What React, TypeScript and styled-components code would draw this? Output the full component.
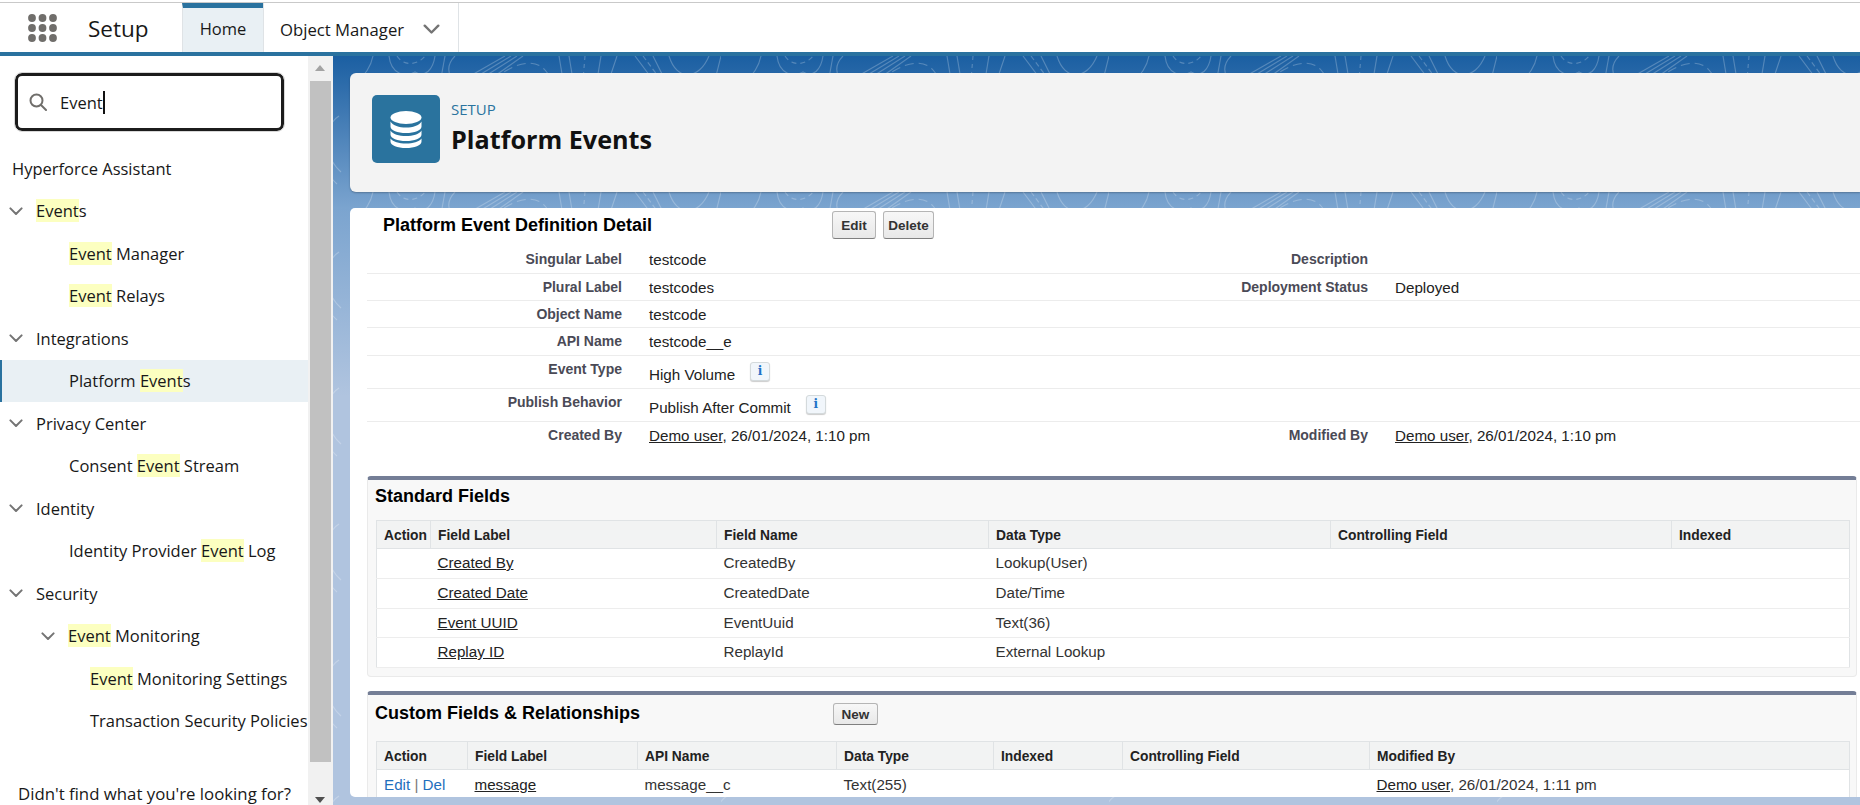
import React from 'react';
import styled, { createGlobalStyle } from 'styled-components';

const GlobalStyle = createGlobalStyle`
    html, body, #root {
        margin: 0;
        height: 100%;
    }
    body {
        overflow: hidden;
        background: #fff;
        color: #181818;
        font-family: "Open Sans", "Liberation Sans", sans-serif;
    }
    * {
        box-sizing: border-box;
    }
`

const Chevron = ({ size = 14 }: { size?: number }) => (
    <svg width={size} height={size * 0.6} viewBox="0 0 20 12" fill="none" stroke="#747474" strokeWidth="2.8" strokeLinecap="round" strokeLinejoin="round">
        <polyline points="2,2 10,10 18,2" />
    </svg>
);

const Waffle = () => (
    <svg width="29" height="28" viewBox="0 0 29 28" fill="#706e6b">
        {[4, 14.5, 25].map(x => [4, 14, 24].map(y => <circle key={`${x}-${y}`} cx={x} cy={y} r="3.9" />))}
    </svg>
);

const SearchGlyph = () => (
    <svg width="18" height="18" viewBox="0 0 18 18" fill="none" stroke="#706e6b" strokeWidth="2" strokeLinecap="round">
        <circle cx="7.5" cy="7.5" r="6" />
        <line x1="12" y1="12" x2="17" y2="17" />
    </svg>
);

const DatabaseGlyph = () => (
    <svg width="32" height="37" viewBox="0 0 32 37" fill="#fff">
        <ellipse cx="16" cy="6.5" rx="15.5" ry="6.5" />
        <path d="M0.5 10.5 C3 14.5 9 16.5 16 16.5 C23 16.5 29 14.5 31.5 10.5 V15.5 C31.5 19.5 24.5 22 16 22 C7.5 22 0.5 19.5 0.5 15.5 Z" />
        <path d="M0.5 19.5 C3 23.5 9 25 16 25 C23 25 29 23.5 31.5 19.5 V23.5 C31.5 27.5 24.5 30 16 30 C7.5 30 0.5 27.5 0.5 23.5 Z" />
        <path d="M0.5 27.5 C3 31 9 32.5 16 32.5 C23 32.5 29 31 31.5 27.5 V30.5 C31.5 34.5 24.5 37 16 37 C7.5 37 0.5 34.5 0.5 30.5 Z" />
    </svg>
);

// contour lines behind the cards, the tile repeats every 388px
const Contours = () => (
    <PatternLayer width="100%" height="100%">
        <defs>
            <pattern id="topo" width="388" height="136" patternUnits="userSpaceOnUse">
                <g fill="none" stroke="#fff" strokeOpacity="0.24" strokeWidth="1.1">
                    <path d="M-6 0 C-4 12 -14 24 -26 30" />
                    <path d="M40 0 C38 10 32 20 24 24" />
                    <path d="M56 0 C58 18 72 22 82 16 C92 22 100 14 102 0" />
                    <path d="M64 0 C70 10 84 10 92 0" strokeDasharray="5 4" />
                    <path d="M112 0 L108 22" />
                    <path d="M122 0 C116 6 114 14 118 22" />
                    <path d="M172 0 L130 24" /><path d="M178 0 L138 24" /><path d="M184 0 L146 24" /><path d="M190 0 L156 24" />
                    <path d="M160 24 C176 10 200 0 212 14 L220 24" strokeDasharray="9 5" />
                    <path d="M226 0 L230 24" /><path d="M236 0 L240 24" /><path d="M252 0 L250 24" strokeDasharray="4 4" />
                    <path d="M268 0 L264 24" />
                    <path d="M284 0 L276 24" />
                    <path d="M302 0 L320 24" /><path d="M310 0 L328 24" strokeDasharray="5 3" /><path d="M320 0 L332 24" />
                    <path d="M336 0 C344 26 366 24 376 0" />
                    <path d="M382 24 L388 0" />
                    <path d="M6 60 C-10 70 -10 100 8 116" />
                    <path d="M-2 50 C-20 80 -14 112 4 128" />
                </g>
            </pattern>
        </defs>
        <rect width="100%" height="100%" fill="url(#topo)" />
    </PatternLayer>
);

const Hit = () => <Mark>Event</Mark>;

const navItems = [
    { indent: 12, label: <>Hyperforce Assistant</> },
    { indent: 9, open: true, label: <><Hit />s</> },
    { indent: 69, label: <><Hit /> Manager</> },
    { indent: 69, label: <><Hit /> Relays</> },
    { indent: 9, open: true, label: <>Integrations</> },
    { indent: 69, selected: true, label: <>Platform <Hit />s</> },
    { indent: 9, open: true, label: <>Privacy Center</> },
    { indent: 69, label: <>Consent <Hit /> Stream</> },
    { indent: 9, open: true, label: <>Identity</> },
    { indent: 69, label: <>Identity Provider <Hit /> Log</> },
    { indent: 9, open: true, label: <>Security</> },
    { indent: 41, open: true, label: <><Hit /> Monitoring</> },
    { indent: 90, label: <><Hit /> Monitoring Settings</> },
    { indent: 90, label: <>Transaction Security Policies</> },
];

const detailRows = [
    { height: 28, label: 'Singular Label', value: 'testcode', label2: 'Description', value2: '' },
    { height: 27, label: 'Plural Label', value: 'testcodes', label2: 'Deployment Status', value2: 'Deployed' },
    { height: 27, label: 'Object Name', value: 'testcode' },
    { height: 28, label: 'API Name', value: 'testcode__e' },
    { height: 33, tall: true, label: 'Event Type', value: 'High Volume' },
    { height: 33, tall: true, label: 'Publish Behavior', value: 'Publish After Commit' },
];

const standardFields = [
    ['Created By', 'CreatedBy', 'Lookup(User)', 30],
    ['Created Date', 'CreatedDate', 'Date/Time', 30],
    ['Event UUID', 'EventUuid', 'Text(36)', 29],
    ['Replay ID', 'ReplayId', 'External Lookup', 30],
] as const;

export default function App() {
    return (
        <Page>
            <GlobalStyle />
            <Header>
                <WaffleSlot><Waffle /></WaffleSlot>
                <AppName>Setup</AppName>
                <HomeTab>Home</HomeTab>
                <MenuTab>Object Manager<Chevron size={17} /></MenuTab>
            </Header>
            <Body>
                <Sidebar>
                    <SearchBox>
                        <SearchGlyph />
                        <SearchText>Event</SearchText>
                        <Caret />
                    </SearchBox>
                    <NavList>
                        {navItems.map((item, i) => (
                            <NavRow key={i} $indent={item.indent} $selected={item.selected}>
                                {item.open && <ChevronSlot><Chevron /></ChevronSlot>}
                                <span>{item.label}</span>
                            </NavRow>
                        ))}
                    </NavList>
                    <NotFound>Didn't find what you're looking for?</NotFound>
                </Sidebar>
                <ScrollTrack>
                    <ArrowUp />
                    <Thumb />
                    <ArrowDown />
                </ScrollTrack>
                <Main>
                    <Contours />
                    <PageHeader>
                        <IconTile><DatabaseGlyph /></IconTile>
                        <HeaderText>
                            <Eyebrow>SETUP</Eyebrow>
                            <PageTitle>Platform Events</PageTitle>
                        </HeaderText>
                    </PageHeader>
                    <DetailCard>
                        <DetailTop>
                            <DetailTitle>Platform Event Definition Detail</DetailTitle>
                            <ClassicButton $width={44}>Edit</ClassicButton>
                            <ClassicButton $width={51}>Delete</ClassicButton>
                        </DetailTop>
                        <DetailList>
                            {detailRows.map(row => (
                                <DetailRow key={row.label} $height={row.height}>
                                    <DetailLabel>{row.label}</DetailLabel>
                                    <DetailValue $tall={row.tall}>
                                        {row.value}
                                        {row.tall && <InfoButton>i</InfoButton>}
                                    </DetailValue>
                                    <DetailLabel>{row.label2}</DetailLabel>
                                    <DetailValue>{row.value2}</DetailValue>
                                </DetailRow>
                            ))}
                            <DetailRow $height={28} $last>
                                <DetailLabel>Created By</DetailLabel>
                                <DetailValue><span><UserLink>Demo user</UserLink>, 26/01/2024, 1:10 pm</span></DetailValue>
                                <DetailLabel>Modified By</DetailLabel>
                                <DetailValue><span><UserLink>Demo user</UserLink>, 26/01/2024, 1:10 pm</span></DetailValue>
                            </DetailRow>
                        </DetailList>
                        <RelatedList $gap={26}>
                            <RelatedTop $height={40}>
                                <RelatedTitle>Standard Fields</RelatedTitle>
                            </RelatedTop>
                            <FieldTable>
                                <colgroup>
                                    {[54, 286, 272, 342, 341, 178].map((w, i) => <col key={i} width={w} />)}
                                </colgroup>
                                <thead>
                                    <tr>
                                        <HeadCell>Action</HeadCell>
                                        <HeadCell>Field Label</HeadCell>
                                        <HeadCell>Field Name</HeadCell>
                                        <HeadCell>Data Type</HeadCell>
                                        <HeadCell>Controlling Field</HeadCell>
                                        <HeadCell>Indexed</HeadCell>
                                    </tr>
                                </thead>
                                <tbody>
                                    {standardFields.map(([label, name, type, height]) => (
                                        <FieldRow key={name} $height={height}>
                                            <FieldCell />
                                            <FieldCell><UserLink>{label}</UserLink></FieldCell>
                                            <FieldCell>{name}</FieldCell>
                                            <FieldCell>{type}</FieldCell>
                                            <FieldCell />
                                            <FieldCell />
                                        </FieldRow>
                                    ))}
                                </tbody>
                            </FieldTable>
                        </RelatedList>
                        <RelatedList $gap={14}>
                            <RelatedTop $height={46}>
                                <RelatedTitle $wide>Custom Fields &amp; Relationships</RelatedTitle>
                                <ClassicButton $width={45} $small>New</ClassicButton>
                            </RelatedTop>
                            <FieldTable>
                                <colgroup>
                                    {[91, 170, 199, 157, 129, 247, 480].map((w, i) => <col key={i} width={w} />)}
                                </colgroup>
                                <thead>
                                    <tr>
                                        <HeadCell>Action</HeadCell>
                                        <HeadCell>Field Label</HeadCell>
                                        <HeadCell>API Name</HeadCell>
                                        <HeadCell>Data Type</HeadCell>
                                        <HeadCell>Indexed</HeadCell>
                                        <HeadCell>Controlling Field</HeadCell>
                                        <HeadCell>Modified By</HeadCell>
                                    </tr>
                                </thead>
                                <tbody>
                                    <FieldRow $height={32}>
                                        <FieldCell><ActionLink>Edit</ActionLink> <Pipe>|</Pipe> <ActionLink>Del</ActionLink></FieldCell>
                                        <FieldCell><UserLink>message</UserLink></FieldCell>
                                        <FieldCell>message__c</FieldCell>
                                        <FieldCell>Text(255)</FieldCell>
                                        <FieldCell />
                                        <FieldCell />
                                        <FieldCell><UserLink>Demo user</UserLink>, 26/01/2024, 1:11 pm</FieldCell>
                                    </FieldRow>
                                </tbody>
                            </FieldTable>
                        </RelatedList>
                    </DetailCard>
                </Main>
            </Body>
        </Page>
    );
}

const Page = styled.div`
    display: flex;
    flex-direction: column;
    height: 100vh;
`
const Header = styled.header`
    display: flex;
    flex: none;
    height: 54px;
    margin-top: 2px;
    border-top: 1px solid #c9c9c9;
    border-bottom: 4px solid #2a729f;
    background: #fff;
`
const WaffleSlot = styled.div`
    display: flex;
    align-items: center;
    padding-left: 28px;
    width: 88px;
`
const AppName = styled.div`
    width: 94px;
    font-size: 22.5px;
    line-height: 52px;
`
const HomeTab = styled.div`
    width: 81px;
    border-top: 5px solid #2a729f;
    border-left: 1px solid #dfe3e6;
    background: #e9f0f4;
    font-size: 16.5px;
    line-height: 42px;
    text-align: center;
`
const MenuTab = styled.div`
    display: flex;
    align-items: center;
    gap: 19px;
    width: 196px;
    padding: 3px 0 0 16px;
    border-left: 1px solid #dfe3e6;
    border-right: 1px solid #dfe3e6;
    font-size: 16.7px;
`
const Body = styled.div`
    display: flex;
    flex: 1;
    min-height: 0;
`
const Sidebar = styled.aside`
    display: flex;
    flex-direction: column;
    flex: none;
    width: 308px;
    overflow: hidden;
    background: #fff;
`
const SearchBox = styled.div`
    display: flex;
    align-items: center;
    flex: none;
    height: 58px;
    margin: 17px 24px 0 15px;
    padding-left: 11px;
    border: 3px solid #1c1c1c;
    border-radius: 7px;
    outline: 1px solid #d8d8d8;
`
const SearchText = styled.span`
    margin-left: 13px;
    font-size: 16.5px;
`
const Caret = styled.span`
    width: 2px;
    height: 23px;
    background: #111;
`
const NavList = styled.nav`
    margin-top: 16px;
`
const NavRow = styled.div<{ $indent: number; $selected?: boolean }>`
    display: flex;
    align-items: center;
    height: 42.5px;
    padding-left: ${p => p.$indent}px;
    font-size: 16.5px;
    white-space: nowrap;
    background: ${p => (p.$selected ? '#e9f0f4' : 'transparent')};
    box-shadow: ${p => (p.$selected ? 'inset 2px 0 0 #2a729f' : 'none')};
`
const ChevronSlot = styled.span`
    display: flex;
    margin-right: 13px;
`
const Mark = styled.span`
    background: #fcffc0;
`
const NotFound = styled.div`
    margin: 40px 0 0 18px;
    font-size: 16.8px;
    white-space: nowrap;
`
const ScrollTrack = styled.div`
    display: flex;
    flex-direction: column;
    flex: none;
    width: 25px;
    padding-left: 2px;
    background: #f1f1f1;
`
const Thumb = styled.div`
    flex: none;
    width: 21px;
    height: 681px;
    background: #c1c1c1;
`
const ArrowUp = styled.div`
    flex: none;
    width: 0;
    height: 0;
    margin: 9px 0 10px 5px;
    border-left: 5.5px solid transparent;
    border-right: 5.5px solid transparent;
    border-bottom: 6px solid #a3a3a3;
`
const ArrowDown = styled.div`
    flex: none;
    width: 0;
    height: 0;
    margin: 35px 0 0 5px;
    border-left: 5.5px solid transparent;
    border-right: 5.5px solid transparent;
    border-top: 6px solid #505050;
`
const Main = styled.main`
    position: relative;
    flex: 1;
    min-width: 0;
    padding: 17px 0 8px 17px;
    overflow: hidden;
    background: linear-gradient(180deg, #1b5fa2 0, #7ba4cf 152px, #b0c4df 340px);
`
const PatternLayer = styled.svg`
    position: absolute;
    top: 0;
    left: 0;
`
const PageHeader = styled.section`
    position: relative;
    display: flex;
    align-items: flex-start;
    gap: 11px;
    height: 119px;
    padding: 22px 0 0 22px;
    border-radius: 6px 0 0 6px;
    background: #f3f3f3;
    box-shadow: 0 1px 2px rgba(0, 0, 0, 0.25);
`
const IconTile = styled.div`
    display: flex;
    align-items: center;
    justify-content: center;
    width: 68px;
    height: 68px;
    border-radius: 5px;
    background: #2a739e;
`
const HeaderText = styled.div`
    padding-top: 4px;
`
const Eyebrow = styled.div`
    margin-bottom: 2px;
    font-size: 15px;
    line-height: 20px;
    color: #2a739e;
`
const PageTitle = styled.h1`
    margin: 0;
    font-size: 25.2px;
    line-height: 36px;
    font-weight: 700;
    color: #111;
`
const DetailCard = styled.section`
    position: relative;
    height: 589px;
    margin-top: 16px;
    overflow: hidden;
    border-radius: 5px 0 0 5px;
    background: #fff;
    font-family: "Liberation Sans", Arial, sans-serif;
`
const DetailTop = styled.div`
    display: flex;
    height: 38px;
    padding: 3px 0 0 33px;
    gap: 7px;
`
const DetailTitle = styled.h2`
    width: 442px;
    margin: 0;
    font-size: 18px;
    line-height: 28px;
    font-weight: 700;
    color: #000;
`
const ClassicButton = styled.button<{ $width: number; $small?: boolean }>`
    flex: none;
    width: ${p => p.$width}px;
    height: ${p => (p.$small ? '22px' : '28px')};
    margin-top: ${p => (p.$small ? '8px' : '0')};
    padding: 0;
    border: 1px solid #b5b5b5;
    border-bottom-color: #7f7f7f;
    border-radius: 3px;
    background: linear-gradient(180deg, #f7f7f7, #e8e8e8);
    font-family: "Liberation Sans", Arial, sans-serif;
    font-size: 13.5px;
    font-weight: 700;
    color: #333;
`
const DetailList = styled.div`
    margin-left: 17px;
`
const DetailRow = styled.div<{ $height: number; $last?: boolean }>`
    display: grid;
    grid-template-columns: 255px 491px 255px 1fr;
    height: ${p => p.$height}px;
    border-bottom: ${p => (p.$last ? 'none' : '1px solid #ececec')};
`
const DetailLabel = styled.div`
    padding-top: 5px;
    font-size: 14px;
    line-height: 17px;
    font-weight: 700;
    text-align: right;
    color: #4a4a56;
`
const DetailValue = styled.div<{ $tall?: boolean }>`
    display: flex;
    align-items: flex-start;
    padding: ${p => (p.$tall ? '10px' : '5px')} 0 0 27px;
    font-size: 15.2px;
    line-height: 17px;
    color: #222;
    white-space: pre;
`
const InfoButton = styled.span`
    width: 20px;
    height: 19px;
    margin: -4px 0 0 15px;
    border: 1px solid #d4dadc;
    border-radius: 3px;
    background: #f1f6fb;
    box-shadow: 0 1px 1px rgba(0, 0, 0, 0.2);
    font-family: "DejaVu Serif", serif;
    font-size: 12px;
    font-weight: 700;
    line-height: 17px;
    text-align: center;
    color: #1f72c7;
`
const UserLink = styled.span`
    text-decoration: underline;
    color: #222;
`
const RelatedList = styled.div<{ $gap: number }>`
    margin: ${p => p.$gap}px 3px 0 17px;
    padding: 0 7px 8px 8px;
    border: 1px solid #eaeaea;
    border-top: 4px solid #747e96;
    border-radius: 4px;
    background: #f8f8f8;
`
const RelatedTop = styled.div<{ $height: number }>`
    display: flex;
    height: ${p => p.$height}px;
`
const RelatedTitle = styled.h3<{ $wide?: boolean }>`
    width: ${p => (p.$wide ? '458px' : 'auto')};
    margin: 0 0 0 -1px;
    font-size: 18px;
    line-height: ${p => (p.$wide ? '36px' : '32px')};
    font-weight: 700;
    color: #000;
`
const FieldTable = styled.table`
    width: 1473px;
    table-layout: fixed;
    border-collapse: collapse;
    border: 1px solid #e0e3e5;
    background: #fff;
    font-size: 15.2px;
`
const HeadCell = styled.th`
    height: 28px;
    padding: 1px 0 0 7px;
    border-right: 1px solid #e0e3e5;
    border-bottom: 1px solid #e0e3e5;
    background: #f2f3f3;
    font-size: 13.8px;
    font-weight: 700;
    text-align: left;
    color: #222;
`
const FieldRow = styled.tr<{ $height: number }>`
    height: ${p => p.$height}px;
    border-bottom: 1px solid #ededed;
`
const FieldCell = styled.td`
    padding: 0 0 2px 7px;
    color: #333;
    white-space: nowrap;
`
const ActionLink = styled.span`
    color: #1f6fbd;
`
const Pipe = styled.span`
    color: #777;
`
